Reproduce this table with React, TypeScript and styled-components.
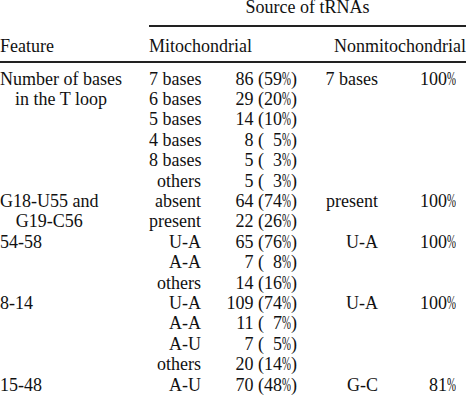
import styled, { createGlobalStyle } from "styled-components";

const GlobalStyle = createGlobalStyle`
  body {
    margin: 0;
    background: #fff;
    color: #111;
    font-family: "Liberation Serif", "Times New Roman", serif;
    font-size: 18px;
  }
`;

const COLS = "149px 52px 96px 81px 78px 10px";
const ROW_H = "20.4px";

const Table = styled.div`
  width: 466px;
`;

const SourceRow = styled.div`
  display: grid;
  grid-template-columns: 149px 1fr;
`;

const SourceCell = styled.div`
  grid-column: 2;
  text-align: center;
  line-height: 14px;
  padding-bottom: 11px;
  border-bottom: 2px solid #222;
`;

const HeaderRow = styled.div`
  display: grid;
  grid-template-columns: ${COLS};
  line-height: ${ROW_H};
  padding: 9px 0 5px;
  border-bottom: 2px solid #222;
`;

const HeadCell = styled.div<{ $span?: string; $align?: "left" | "right" }>`
  grid-column: ${(p) => p.$span || "auto"};
  text-align: ${(p) => p.$align || "left"};
  white-space: nowrap;
`;

const Body = styled.div`
  padding-top: 5.3px;
`;

const Group = styled.div`
  display: grid;
  grid-template-columns: ${COLS};
  grid-auto-rows: ${ROW_H};
  line-height: ${ROW_H};
`;

const FeatureCell = styled.div<{ $rows: number }>`
  grid-column: 1;
  grid-row: 1 / span ${(p) => p.$rows};
`;

const FeatureText = styled.div`
  width: fit-content;
  text-align: center;
  white-space: nowrap;
`;

const Cell = styled.div<{ $col: number; $row: number }>`
  grid-column: ${(p) => p.$col};
  grid-row: ${(p) => p.$row};
  text-align: right;
  white-space: nowrap;
`;

const Pct = styled.span`
  display: inline-block;
  width: 9px;
  transform: scaleX(0.6);
  transform-origin: left center;
`;

const Ghost = styled.span`
  visibility: hidden;
`;

type Entry = [string, number, number];

interface FeatureGroup {
  feature: string[];
  rows: Entry[];
  non: [string, number];
}

const groups: FeatureGroup[] = [
  {
    feature: ["Number of bases", "in the T loop"],
    rows: [
      ["7 bases", 86, 59],
      ["6 bases", 29, 20],
      ["5 bases", 14, 10],
      ["4 bases", 8, 5],
      ["8 bases", 5, 3],
      ["others", 5, 3],
    ],
    non: ["7 bases", 100],
  },
  {
    feature: ["G18-U55 and", "G19-C56"],
    rows: [
      ["absent", 64, 74],
      ["present", 22, 26],
    ],
    non: ["present", 100],
  },
  {
    feature: ["54-58"],
    rows: [
      ["U-A", 65, 76],
      ["A-A", 7, 8],
      ["others", 14, 16],
    ],
    non: ["U-A", 100],
  },
  {
    feature: ["8-14"],
    rows: [
      ["U-A", 109, 74],
      ["A-A", 11, 7],
      ["A-U", 7, 5],
      ["others", 20, 14],
    ],
    non: ["U-A", 100],
  },
  {
    feature: ["15-48"],
    rows: [["A-U", 70, 48]],
    non: ["G-C", 81],
  },
];

const Percent = ({ value }: { value: number }) => (
  <>
    {value}
    <Pct>%</Pct>
  </>
);

const CountValue = ({ count, pct }: { count: number; pct: number }) => (
  <>
    {count} ({pct < 10 && <Ghost>0</Ghost>}
    <Percent value={pct} />)
  </>
);

const App = () => {
  return (
    <>
      <GlobalStyle />
      <Table>
        <SourceRow>
          <SourceCell>Source of tRNAs</SourceCell>
        </SourceRow>
        <HeaderRow>
          <HeadCell>Feature</HeadCell>
          <HeadCell $span="2 / span 2">Mitochondrial</HeadCell>
          <HeadCell $span="4 / span 3" $align="right">
            Nonmitochondrial
          </HeadCell>
        </HeaderRow>
        <Body>
          {groups.map((g) => (
            <Group key={g.feature[0]}>
              <FeatureCell $rows={g.rows.length}>
                <FeatureText>
                  {g.feature.map((line) => (
                    <div key={line}>{line}</div>
                  ))}
                </FeatureText>
              </FeatureCell>
              {g.rows.map(([label, count, pct], i) => (
                <>
                  <Cell key={label + "l"} $col={2} $row={i + 1}>
                    {label}
                  </Cell>
                  <Cell key={label + "v"} $col={3} $row={i + 1}>
                    <CountValue count={count} pct={pct} />
                  </Cell>
                </>
              ))}
              <Cell $col={4} $row={1}>
                {g.non[0]}
              </Cell>
              <Cell $col={5} $row={1}>
                <Percent value={g.non[1]} />
              </Cell>
            </Group>
          ))}
        </Body>
      </Table>
    </>
  );
};

export default App;
